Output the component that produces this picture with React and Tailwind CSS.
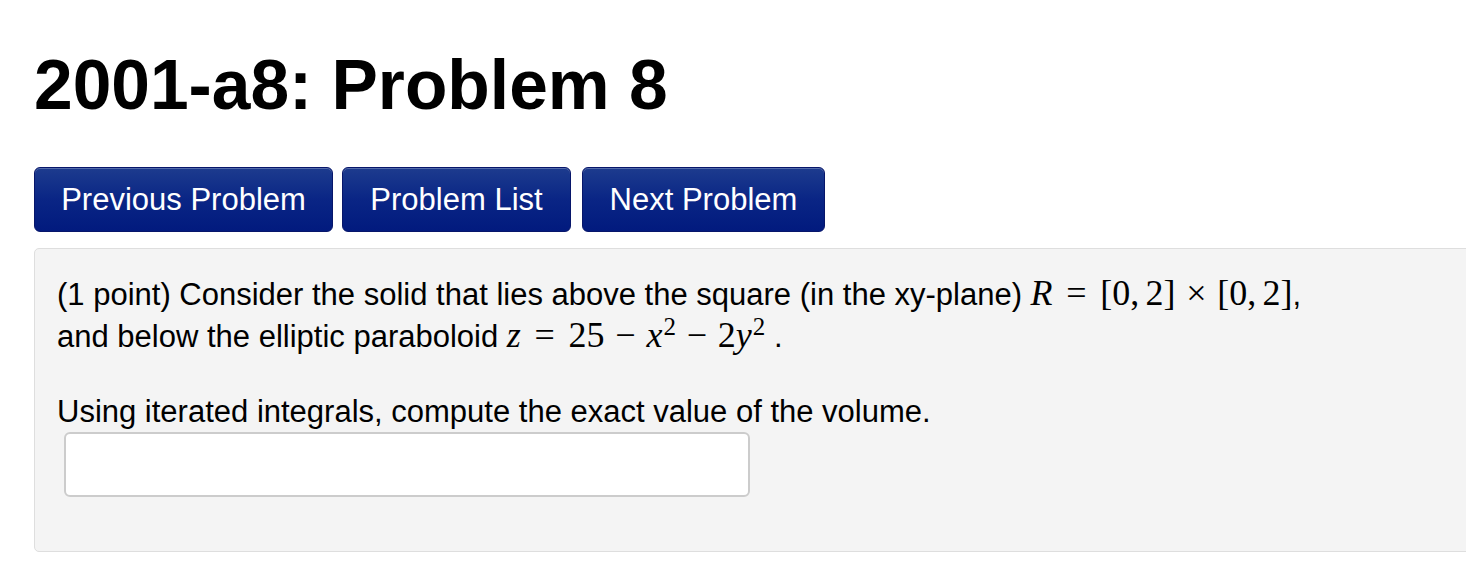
export default function App() {
  const sans = { fontFamily: '"Liberation Sans", Arial, sans-serif' };
  const buttons = [
    { label: "Previous Problem", cls: "w-[299px]" },
    { label: "Problem List", cls: "ml-[9px] w-[229px]" },
    { label: "Next Problem", cls: "ml-[11px] w-[243px]" },
  ];

  const Rel = ({ children }) => <span className="mx-[0.38em]">{children}</span>;
  const Bin = ({ children }) => <span className="mx-[0.3em]">{children}</span>;
  const Sup = ({ children }) => (
    <sup className="relative top-[-0.5em] ml-[0.04em] align-baseline text-[25px] leading-none not-italic">
      {children}
    </sup>
  );

  return (
    <div className="h-[586px] w-full overflow-hidden bg-white text-black" style={sans}>
      <div className="pl-[34px] pt-[50px]">
        <h1 className="text-[69.5px] font-bold leading-[70px]">2001-a8: Problem 8</h1>

        <div className="mt-[47px] flex">
          {buttons.map((b) => (
            <button
              key={b.label}
              className={`${b.cls} h-[65px] rounded-[6px] border border-[#07166a] bg-gradient-to-b from-[#1d3b8e] via-[#0a2585] to-[#021a7e] pt-[2px] text-center text-[31px] text-white shadow-[inset_0_1px_0_rgba(255,255,255,0.25)]`}
            >
              {b.label}
            </button>
          ))}
        </div>

        <div className="mt-[16px] h-[304px] w-[1500px] rounded-[5px] border border-[#dedede] bg-[#f4f4f4] pl-[22px] pt-[25px]">
          <p className="text-[31px] leading-[42px]">
            (1 point) Consider the solid that lies above the square (in the xy-plane){" "}
            <span className="font-['Liberation_Serif'] text-[36px] leading-none">
              <i>R</i>
              <Rel>=</Rel>[0,<span className="ml-[0.17em]">2]</span>
              <Bin>×</Bin>[0,<span className="ml-[0.17em]">2]</span>
            </span>
            ,
            <br />
            and below the elliptic paraboloid{" "}
            <span className="font-['Liberation_Serif'] text-[36px] leading-none">
              <i>z</i>
              <Rel>=</Rel>25<Bin>−</Bin>
              <i>x</i>
              <Sup>2</Sup>
              <Bin>−</Bin>2<i>y</i>
              <Sup>2</Sup>
            </span>{" "}
            .
          </p>
          <p className="mt-[33px] text-[31px] leading-[42px]">
            Using iterated integrals, compute the exact value of the volume.
          </p>
          <input
            type="text"
            className="ml-[7px] mt-[-1px] block h-[65px] w-[686px] rounded-[6px] border-2 border-[#cccccc] bg-white"
          />
        </div>
      </div>
    </div>
  );
}
